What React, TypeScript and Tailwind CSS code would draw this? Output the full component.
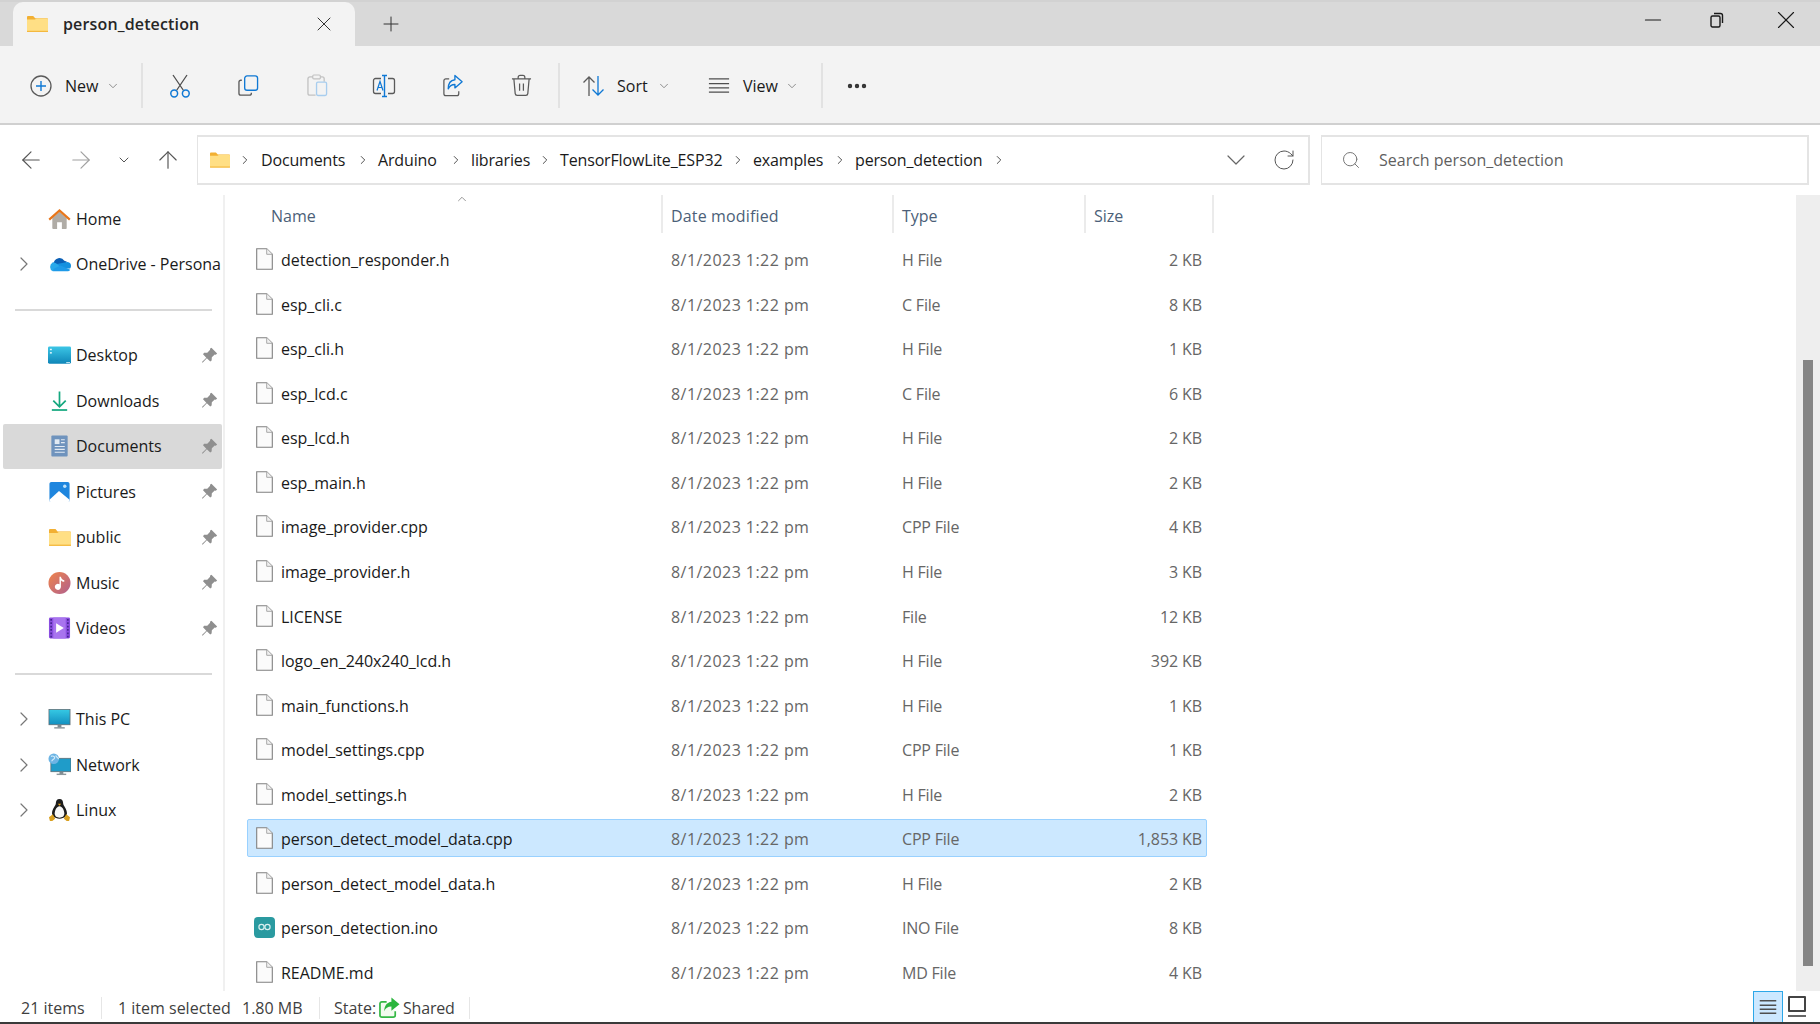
import React from 'react'
import { X, Plus, Minus, ChevronDown, ChevronRight, ChevronUp, ArrowLeft, ArrowRight, ArrowUp, RotateCw, Search, MoreHorizontal } from 'lucide-react'

const FolderIcon = ({ className = '' }: { className?: string }) => (
  <svg viewBox="0 0 21 16" className={className}>
    <path d="M0 1.2C0 .5.5 0 1.2 0h5l2 2.2h11.6c.7 0 1.2.5 1.2 1.2V6H0z" fill="#f2b033" />
    <path d="M0 3.600h8l1.600-1h10.200c.7 0 1.200.5 1.200 1.200v11c0 .7-.5 1.200-1.200 1.200H1.200C.5 16 0 15.500 0 14.800z" fill="#ffdf85" />
    <rect x="0" y="14.800" width="21" height="1.200" fill="#f4b83f" />
  </svg>
)

const FileIcon = () => (
  <svg viewBox="0 0 17 22" className="w-[17px] h-[22px] mb-[2px]">
    <path d="M.7.7h10l5.600 5.600v15H.7z" fill="#fbfbfb" stroke="#808080" strokeWidth="1.100" />
    <path d="M10.700.7v5.600h5.600" fill="#f0f0f0" stroke="#a8a8a8" strokeWidth="1" />
  </svg>
)

const ArduinoIcon = () => (
  <svg viewBox="0 0 21 21" className="w-[21px] h-[21px] mb-[2px]">
    <rect width="21" height="21" rx="4" fill="#2a9aa0" />
    <circle cx="7.500" cy="10" r="2.600" fill="none" stroke="#d8f0f0" strokeWidth="1.200" />
    <circle cx="13.500" cy="10" r="2.600" fill="none" stroke="#d8f0f0" strokeWidth="1.200" />
  </svg>
)

const PinIcon = () => (
  <svg viewBox="0 0 16 16" className="w-[17px] h-[17px]">
    <path d="M9.800.8l5.400 5.400-1.300 1-1-.2-2.700 2.700-.2 3-1.300 1L5.500 10.500 1.500 14.800.9 14.200 5 10 1.900 6.800l1-1.300 3-.2 2.700-2.700-.2-1z" fill="#8f8f8f" />
  </svg>
)

const HomeIcon = () => (
  <svg viewBox="0 0 24 24" className="w-[24px] h-[24px]">
    <path d="M4.500 11L12 4.500 19.500 11v10.500c0 .6-.4 1-1 1h-4v-7h-5v7h-4c-.6 0-1-.4-1-1z" fill="#b0aca6" />
    <path d="M12 1.500l11.500 10.300-1.500 1.700L12 4.600 2 13.500.5 11.800z" fill="#e8761a" />
  </svg>
)

const CloudIcon = () => (
  <svg viewBox="0 0 24 24" className="w-[24px] h-[24px]">
    <path d="M6 11a6 6 0 0 1 11-2.500 5 5 0 0 1 3 1.500L10 16z" fill="#0a5fb5" />
    <path d="M4.500 10.500c2-.3 3.500.4 4.700 1.600L20.500 10a4 4 0 0 1 3.500 4 4.500 4.500 0 0 1-.9 2.700L12 17z" fill="#1490df" />
    <path d="M5 19.500A5 5 0 0 1 5 10.500c2.500 0 4 1.200 5.500 2.500l3 2-9 4.500z" fill="#28a8ea" />
    <path d="M5 19.500h16c1 0 1.800-.6 2.200-1.500L13 13.500 6 17z" fill="#1e9ae8" />
  </svg>
)

const DesktopIcon = () => (
  <svg viewBox="0 0 24 24" className="w-[24px] h-[24px]">
    <defs>
      <linearGradient id="desk" x1="0" y1="0" x2="0" y2="1">
        <stop offset="0" stopColor="#3cc6e6" />
        <stop offset="1" stopColor="#0f86b8" />
      </linearGradient>
    </defs>
    <rect y="3" width="24" height="18" rx="1.500" fill="url(#desk)" />
    <rect x="2" y="5.500" width="2" height="1.500" fill="#e9f8fc" />
    <rect x="2" y="9" width="2" height="1.500" fill="#e9f8fc" />
    <rect x="19" y="19.500" width="4" height="1" fill="#e0f4fa" />
  </svg>
)

const DownloadIcon = () => (
  <svg viewBox="0 0 24 24" className="w-[24px] h-[24px]">
    <path d="M12 2v15.500M5.500 11.500l6.500 6.500 6.500-6.500" fill="none" stroke="#15a87f" strokeWidth="1.800" />
    <rect x="4" y="20.500" width="16" height="1.800" fill="#15a87f" />
  </svg>
)

const DocumentsIcon = () => (
  <svg viewBox="0 0 24 24" className="w-[24px] h-[24px]">
    <rect x="3.500" y="1" width="17" height="22" rx="1" fill="#6f93bd" />
    <rect x="7" y="5" width="5" height="5" fill="#e2eaf3" />
    <path d="M13.500 5.500h4M13.500 8.500h4M7 12.500h10.500M7 15.500h10.500M7 18.500h10.500" stroke="#e2eaf3" strokeWidth="1.200" />
  </svg>
)

const PicturesIcon = () => (
  <svg viewBox="0 0 24 24" className="w-[24px] h-[24px]">
    <rect x="1.500" y="1.500" width="21" height="21" rx="2" fill="#1f86de" />
    <path d="M1.500 20l10-9 11 9v1a1.500 1.500 0 0 1-1.500 1.500H3A1.500 1.500 0 0 1 1.500 21z" fill="#fff" />
    <circle cx="17.500" cy="6" r="1.800" fill="#bfe2fa" />
  </svg>
)

const MusicIcon = () => (
  <svg viewBox="0 0 24 24" className="w-[24px] h-[24px]">
    <defs>
      <linearGradient id="mus" x1="0" y1="0" x2="1" y2="1">
        <stop offset="0" stopColor="#f0844a" />
        <stop offset="1" stopColor="#b0608e" />
      </linearGradient>
    </defs>
    <circle cx="12" cy="12" r="11.500" fill="url(#mus)" />
    <path d="M12 5.500h1.500c.3 2 1.500 3 3.500 3.500v1.800c-1.500-.2-2.700-.8-3.500-1.800V16a3.200 3.200 0 1 1-1.500-2.700z" fill="#fff" />
  </svg>
)

const VideosIcon = () => (
  <svg viewBox="0 0 24 24" className="w-[24px] h-[24px]">
    <rect x="1" y="1" width="22" height="22" rx="1.500" fill="#8a4de0" />
    <rect x="5.500" y="1" width="13" height="22" fill="#a874ee" />
    <path d="M2.500 3.500h1.500M2.500 7h1.500M2.500 10.500h1.500M2.500 14h1.500M2.500 17.500h1.500M2.500 21h1.500M20 3.500h1.500M20 7h1.500M20 10.500h1.500M20 14h1.500M20 17.500h1.500M20 21h1.500" stroke="#3d1f86" strokeWidth="1.800" />
    <path d="M8.500 7l8 5-8 5z" fill="#fff" />
  </svg>
)

const PcIcon = () => (
  <svg viewBox="0 0 24 24" className="w-[24px] h-[24px]">
    <defs>
      <linearGradient id="pc" x1="0" y1="0" x2="0" y2="1">
        <stop offset="0" stopColor="#36c9e4" />
        <stop offset="1" stopColor="#128fc0" />
      </linearGradient>
    </defs>
    <rect x="1" y="2" width="22" height="16" fill="url(#pc)" stroke="#5f6b72" strokeWidth=".8" />
    <rect x="10" y="18" width="4" height="3" fill="#7e8a90" />
    <rect x="6.500" y="20.500" width="11" height="1.500" fill="#8c979c" />
  </svg>
)

const NetworkIcon = () => (
  <svg viewBox="0 0 24 24" className="w-[24px] h-[24px]">
    <rect x="3" y="5" width="21" height="14" fill="#1f9cc9" stroke="#5f6b72" strokeWidth=".8" />
    <rect x="12" y="19" width="4" height="2.500" fill="#7e8a90" />
    <rect x="9" y="21" width="10" height="1.500" fill="#8c979c" />
    <circle cx="6" cy="5.500" r="5.500" fill="#6cb4e4" />
    <path d="M3 3c2-1 4 0 4 1.500S4 6 4 8M8 2c1 2 3 3 3 4" stroke="#d2ecfa" strokeWidth="1.200" fill="none" />
  </svg>
)

const LinuxIcon = () => (
  <svg viewBox="0 0 24 24" className="w-[24px] h-[24px]">
    <path d="M12 .5c2.800 0 3.800 2.200 3.800 4.500 0 2.500 4 6 4 10.500 0 3-2.500 5.500-7.800 5.500S4.200 18.500 4.200 15.500C4.200 11 8.200 7.500 8.200 5 8.200 2.700 9.200.5 12 .5z" fill="#1d1d1d" />
    <path d="M12 8c2.800 0 5 4 5 7.500s-2.200 4.500-5 4.500-5-1-5-4.500S9.200 8 12 8z" fill="#f7f7f7" />
    <path d="M10.300 5.500h3.400L12 7.500z" fill="#e8a51e" />
    <path d="M1 19.500l4-3 2.500 4.500-3 2.500H2zM23 19.500l-4-3-2.500 4.500 3 2.500H22z" fill="#d9a020" />
  </svg>
)

const SharedIcon = () => (
  <svg viewBox="0 0 22 22" className="w-[21px] h-[21px]">
    <path d="M8 5H3a2 2 0 0 0-2 2v12a2 2 0 0 0 2 2h12a2 2 0 0 0 2-2v-4" fill="#f2fbef" stroke="#35b845" strokeWidth="1.800" />
    <path d="M13 .5l8.500 7-8.500 7V10c-4 0-6 1.500-7.500 5 0-6 3-9.500 7.500-10z" fill="#2cb53e" />
  </svg>
)

const NewIcon = () => (
  <svg viewBox="0 0 22 22" className="w-[22px] h-[22px]">
    <circle cx="11" cy="11" r="10" fill="none" stroke="#5a5a5a" strokeWidth="1.300" />
    <path d="M11 6v10M6 11h10" stroke="#0f78d4" strokeWidth="1.400" />
  </svg>
)

const CutIcon = () => (
  <svg viewBox="0 0 22 24" className="w-[22px] h-[24px]">
    <path d="M4 1l10.500 15.500M18 1L7.500 16.500" stroke="#4d4d4d" strokeWidth="1.300" fill="none" />
    <circle cx="5.200" cy="19.500" r="3.400" fill="none" stroke="#0f78d4" strokeWidth="1.500" />
    <circle cx="16.800" cy="19.500" r="3.400" fill="none" stroke="#0f78d4" strokeWidth="1.500" />
  </svg>
)

const CopyIcon = () => (
  <svg viewBox="0 0 22 22" className="w-[21px] h-[21px]">
    <path d="M4 5.500H3a2 2 0 0 0-2 2V19a2 2 0 0 0 2 2h9a2 2 0 0 0 2-2v-.5" fill="none" stroke="#5a5a5a" strokeWidth="1.400" />
    <rect x="7" y="1" width="13.500" height="15" rx="2.500" fill="none" stroke="#0f78d4" strokeWidth="1.400" />
  </svg>
)

const PasteIcon = () => (
  <svg viewBox="0 0 22 24" className="w-[21px] h-[23px]">
    <path d="M6 3H3a2 2 0 0 0-2 2v15a2 2 0 0 0 2 2h6M14 3h2a2 2 0 0 1 2 2v3" fill="none" stroke="#c2c2c2" strokeWidth="1.400" />
    <rect x="6" y="1" width="8" height="4" rx="1.200" fill="none" stroke="#c2c2c2" strokeWidth="1.300" />
    <rect x="10" y="8.500" width="10.500" height="14" rx="1.500" fill="none" stroke="#a8cdee" strokeWidth="1.400" />
  </svg>
)

const RenameIcon = () => (
  <svg viewBox="0 0 24 24" className="w-[24px] h-[24px]">
    <path d="M9 4.500H3.500a2 2 0 0 0-2 2v11a2 2 0 0 0 2 2H9M16 4.500h4.500a2 2 0 0 1 2 2v11a2 2 0 0 1-2 2H16" fill="none" stroke="#5a5a5a" strokeWidth="1.300" />
    <path d="M12.500 1.500v21M10 1.500h5M10 22.500h5" stroke="#0f78d4" strokeWidth="1.400" fill="none" />
    <path d="M5 16.500L8 7.500l3 9M6 13.500h4" stroke="#0f78d4" strokeWidth="1.200" fill="none" />
  </svg>
)

const ShareIcon = () => (
  <svg viewBox="0 0 22 24" className="w-[22px] h-[23px]">
    <path d="M7 5H3.500a2 2 0 0 0-2 2v13.500a2 2 0 0 0 2 2H15a2 2 0 0 0 2-2V18" fill="none" stroke="#5a5a5a" strokeWidth="1.300" />
    <path d="M13 1.500l7.500 6.500-7.500 6.500V11c-3.500 0-5.500 1.200-7 4.500 0-5.500 2.500-9 7-9.500z" fill="none" stroke="#0f78d4" strokeWidth="1.400" strokeLinejoin="round" />
  </svg>
)

const DeleteIcon = () => (
  <svg viewBox="0 0 22 24" className="w-[21px] h-[23px]">
    <path d="M1 5h20M7.500 5V3.500a2 2 0 0 1 2-2h3a2 2 0 0 1 2 2V5M3 5l1.400 15.500a2 2 0 0 0 2 1.800h9.200a2 2 0 0 0 2-1.800L19 5M9 10v7.500M13 10v7.500" fill="none" stroke="#5a5a5a" strokeWidth="1.300" />
  </svg>
)

const SortIcon = () => (
  <svg viewBox="0 0 24 22" className="w-[24px] h-[22px]">
    <path d="M7 21V2M1.500 7.500L7 2l5.500 5.500" fill="none" stroke="#5a5a5a" strokeWidth="1.300" />
    <path d="M16 1v19M10.500 14.500L16 20l5.500-5.500" fill="none" stroke="#0f78d4" strokeWidth="1.300" />
  </svg>
)

const ViewIcon = ({ className = '' }: { className?: string }) => (
  <svg viewBox="0 0 24 18" preserveAspectRatio="none" className={className}>
    <path d="M1 2h22M1 7h22M1 11.500h22M1 16h22" stroke="#4f4f4f" strokeWidth="1.500" />
  </svg>
)

const RestoreIcon = () => (
  <svg viewBox="0 0 14 16" className="w-[14px] h-[16px]">
    <rect x="1" y="4" width="9" height="11" rx="1.500" fill="none" stroke="#1a1a1a" strokeWidth="1.400" />
    <path d="M4 1.500h6.500a2 2 0 0 1 2 2V11" fill="none" stroke="#1a1a1a" strokeWidth="1.400" />
  </svg>
)

const Separator = () => <div className="w-[2px] h-[45px] bg-[#e2e2e2] shrink-0" />

const ToolButton = ({ width, children }: { width: string; children: React.ReactNode }) => (
  <div className={`${width} flex items-center justify-center shrink-0`}>{children}</div>
)

const navItems = [
  { type: 'item', name: 'Home', icon: <HomeIcon /> },
  { type: 'item', name: 'OneDrive - Persona', icon: <CloudIcon />, expand: true },
  { type: 'sep' },
  { type: 'item', name: 'Desktop', icon: <DesktopIcon />, pin: true },
  { type: 'item', name: 'Downloads', icon: <DownloadIcon />, pin: true },
  { type: 'item', name: 'Documents', icon: <DocumentsIcon />, pin: true, selected: true },
  { type: 'item', name: 'Pictures', icon: <PicturesIcon />, pin: true },
  { type: 'item', name: 'public', icon: <FolderIcon className="w-[22px] h-[17px]" />, pin: true },
  { type: 'item', name: 'Music', icon: <MusicIcon />, pin: true },
  { type: 'item', name: 'Videos', icon: <VideosIcon />, pin: true },
  { type: 'sep' },
  { type: 'item', name: 'This PC', icon: <PcIcon />, expand: true },
  { type: 'item', name: 'Network', icon: <NetworkIcon />, expand: true },
  { type: 'item', name: 'Linux', icon: <LinuxIcon />, expand: true },
]

const files = [
  ['detection_responder.h', 'H File', '2 KB'],
  ['esp_cli.c', 'C File', '8 KB'],
  ['esp_cli.h', 'H File', '1 KB'],
  ['esp_lcd.c', 'C File', '6 KB'],
  ['esp_lcd.h', 'H File', '2 KB'],
  ['esp_main.h', 'H File', '2 KB'],
  ['image_provider.cpp', 'CPP File', '4 KB'],
  ['image_provider.h', 'H File', '3 KB'],
  ['LICENSE', 'File', '12 KB'],
  ['logo_en_240x240_lcd.h', 'H File', '392 KB'],
  ['main_functions.h', 'H File', '1 KB'],
  ['model_settings.cpp', 'CPP File', '1 KB'],
  ['model_settings.h', 'H File', '2 KB'],
  ['person_detect_model_data.cpp', 'CPP File', '1,853 KB'],
  ['person_detect_model_data.h', 'H File', '2 KB'],
  ['person_detection.ino', 'INO File', '8 KB'],
  ['README.md', 'MD File', '4 KB'],
]

const crumbs = [
  ['Documents', 'w-[117px]'],
  ['Arduino', 'w-[93px]'],
  ['libraries', 'w-[89px]'],
  ['TensorFlowLite_ESP32', 'w-[193px]'],
  ['examples', 'w-[102px]'],
  ['person_detection', 'w-[159px]'],
]

export default function App() {
  return (
    <div className="w-[1820px] h-[1024px] flex flex-col overflow-hidden bg-white text-[16px] text-[#1a1a1a] font-['Open_Sans','Noto_Sans',sans-serif]">
      {/* Title bar */}
      <div className="h-[46px] flex shrink-0 bg-[#d9d9d9] border-t-2 border-[#d2d2d2]">
        <div className="ml-[13px] w-[342px] h-[44px] flex items-center bg-[#f3f3f3] rounded-t-[10px]">
          <FolderIcon className="ml-[14px] w-[21px] h-[16px]" />
          <span className="ml-[15px] font-semibold text-[#262626] tracking-[0.15px]">person_detection</span>
          <X className="ml-auto mr-[19px] w-[24px] h-[24px] text-[#333]" strokeWidth={1} />
        </div>
        <div className="ml-[24px] h-[44px] flex items-center">
          <Plus className="w-[24px] h-[24px] text-[#333]" strokeWidth={1} />
        </div>
        <div className="ml-auto h-[36px] flex items-center">
          <Minus className="w-[26px] h-[26px] text-[#1a1a1a] mr-[44px]" strokeWidth={1} />
          <RestoreIcon />
          <X className="w-[30px] h-[30px] text-[#1a1a1a] ml-[47px] mr-[19px]" strokeWidth={0.9} />
        </div>
      </div>

      {/* Command bar */}
      <div className="h-[79px] flex items-center shrink-0 bg-[#f3f3f3] border-b-2 border-[#d0d0d0] pl-[30px] pt-[2px]">
        <NewIcon />
        <span className="ml-[13px] w-[41px]">New</span>
        <ChevronDown className="w-[14px] h-[14px] text-[#777]" strokeWidth={1.4} />
        <div className="ml-[21px]"><Separator /></div>
        <ToolButton width="w-[73px]"><CutIcon /></ToolButton>
        <ToolButton width="w-[64px]"><CopyIcon /></ToolButton>
        <ToolButton width="w-[74px]"><PasteIcon /></ToolButton>
        <ToolButton width="w-[60px]"><RenameIcon /></ToolButton>
        <ToolButton width="w-[78px]"><ShareIcon /></ToolButton>
        <ToolButton width="w-[58px]"><DeleteIcon /></ToolButton>
        <div className="ml-[8px]"><Separator /></div>
        <div className="ml-[22px]"><SortIcon /></div>
        <span className="ml-[11px] w-[40px]">Sort</span>
        <ChevronDown className="w-[14px] h-[14px] text-[#777]" strokeWidth={1.4} />
        <ViewIcon className="ml-[37px] w-[22px] h-[17px]" />
        <span className="ml-[13px] w-[42px]">View</span>
        <ChevronDown className="w-[14px] h-[14px] text-[#777]" strokeWidth={1.4} />
        <div className="ml-[22px]"><Separator /></div>
        <MoreHorizontal className="ml-[22px] w-[24px] h-[24px] text-[#333]" strokeWidth={2.4} />
      </div>

      {/* Address row */}
      <div className="h-[70px] flex items-center shrink-0">
        <ArrowLeft className="ml-[17px] w-[28px] h-[28px] text-[#555]" strokeWidth={1} />
        <ArrowRight className="ml-[22px] w-[28px] h-[28px] text-[#a0a0a0]" strokeWidth={1} />
        <ChevronDown className="ml-[21px] w-[16px] h-[16px] text-[#555]" strokeWidth={1.5} />
        <ArrowUp className="ml-[22px] w-[28px] h-[28px] text-[#555]" strokeWidth={1} />
        <div className="ml-[15px] w-[1113px] h-[50px] flex items-center border-2 border-[#e4e4e4] border-l-[1px] pl-[12px] shrink-0 tracking-[-0.15px]">
          <FolderIcon className="w-[20px] h-[16px] shrink-0" />
          <ChevronRight className="ml-[8px] mr-[9px] w-[14px] h-[14px] text-[#444] shrink-0" strokeWidth={1.6} />
          {crumbs.map(([label, width]) => (
            <div key={label} className={`${width} flex items-center justify-between shrink-0`}>
              <span>{label}</span>
              <ChevronRight className="w-[14px] h-[14px] mr-[8px] shrink-0 text-[#444]" strokeWidth={1.6} />
            </div>
          ))}
          <ChevronDown className="ml-auto mr-[20px] w-[32px] h-[32px] text-[#666]" strokeWidth={0.9} />
          <RotateCw className="mr-[12px] w-[24px] h-[24px] text-[#555]" strokeWidth={1} />
        </div>
        <div className="ml-[11px] w-[488px] h-[50px] flex items-center border-2 border-[#e4e4e4] border-l-[1px] pl-[19px] shrink-0">
          <Search className="w-[20px] h-[20px] text-[#777]" strokeWidth={1.2} />
          <span className="ml-[18px] text-[#5f5f5f]">Search person_detection</span>
        </div>
      </div>

      {/* Main */}
      <div className="flex-1 flex min-h-0">
        <div className="w-[225px] shrink-0 border-r-2 border-[#f0f0f0] pt-[1px]">
          {navItems.map((item, i) =>
            item.type === 'sep' ? (
              <div key={i} className="h-[45.5px] flex items-center pl-[15px]">
                <div className="w-[197px] h-[2px] bg-[#d9d9d9]" />
              </div>
            ) : (
              <div key={i} className="h-[45.5px] flex items-center pl-[3px]">
                <div className={`w-[219px] h-[45px] flex items-center rounded-[2px] ${item.selected ? 'bg-[#d9d9d9]' : ''}`}>
                  <div className="w-[45px] shrink-0 flex items-center justify-center pr-[3px]">
                    {item.expand && <ChevronRight className="w-[24px] h-[24px] text-[#777]" strokeWidth={1.2} />}
                  </div>
                  <div className="w-[28px] shrink-0 flex items-center justify-center pr-[5px]">{item.icon}</div>
                  <span className="whitespace-nowrap">{item.name}</span>
                  {item.pin && <div className="ml-auto mr-[4px]"><PinIcon /></div>}
                </div>
              </div>
            )
          )}
        </div>

        {/* File list */}
        <div className="flex-1 pl-[22px] overflow-hidden">
          <div className="h-[43px] flex w-[967px] text-[#4c5f78]">
            <div className="w-[416px] h-[38px] flex items-center pt-[3px] pl-[24px] relative border-r-2 border-[#ebebeb]">
              <span>Name</span>
              <ChevronUp className="absolute left-[207px] top-[-3px] w-[16px] h-[14px] text-[#777]" strokeWidth={1.3} />
            </div>
            <div className="w-[231px] h-[38px] flex items-center pt-[3px] pl-[8px] border-r-2 border-[#ebebeb] tracking-[0.15px]">Date modified</div>
            <div className="w-[192px] h-[38px] flex items-center pt-[3px] pl-[8px] border-r-2 border-[#ebebeb]">Type</div>
            <div className="w-[128px] h-[38px] flex items-center pt-[3px] pl-[8px] border-r-2 border-[#ebebeb]">Size</div>
          </div>
          {files.map(([name, type, size]) => {
            const selected = name === 'person_detect_model_data.cpp'
            return (
              <div key={name} className="h-[44.54px] flex items-center">
                <div className={`w-[960px] h-[38px] mb-[2px] pt-[2px] flex items-center rounded-[2px] border ${selected ? 'bg-[#cce8ff] border-[#99d1ff]' : 'border-transparent'}`}>
                  <div className="w-[33px] flex justify-center">
                    {name.endsWith('.ino') ? <ArduinoIcon /> : <FileIcon />}
                  </div>
                  <div className="w-[390px] whitespace-nowrap tracking-[-0.02px]">{name}</div>
                  <div className="w-[231px] text-[#666] tracking-[0.45px]">8/1/2023 1:22 pm</div>
                  <div className="w-[150px] text-[#666] tracking-[-0.2px]">{type}</div>
                  <div className="w-[150px] text-right text-[#666] tracking-[-0.1px]">{size}</div>
                </div>
              </div>
            )
          })}
        </div>

        {/* Scrollbar */}
        <div className="w-[24px] shrink-0 bg-[#eeeeee] pl-[7px] pt-[165px]">
          <div className="w-[10px] h-[606px] bg-[#858585]" />
        </div>
      </div>

      {/* Status bar */}
      <div className="h-[31px] flex items-center shrink-0 text-[#3f3f3f]">
        <div className="flex items-center pt-[2px]">
          <span className="ml-[21px] w-[80px]">21 items</span>
          <div className="w-px h-[22px] bg-[#e6e6e6]" />
          <span className="ml-[16px] w-[124px]">1 item selected</span>
          <span className="w-[77px]">1.80 MB</span>
          <div className="w-px h-[22px] bg-[#e6e6e6]" />
          <span className="ml-[14px] w-[45px]">State:</span>
          <SharedIcon />
          <span className="ml-[3px] w-[66px] tracking-[-0.2px]">Shared</span>
          <div className="w-px h-[22px] bg-[#e6e6e6]" />
        </div>
        <div className="ml-auto w-[30px] h-[31px] flex items-center justify-center bg-[#cce8ff] border border-[#2ca7e8] border-b-0">
          <ViewIcon className="w-[18px] h-[16px]" />
        </div>
        <div className="ml-[5px] mr-[14px] w-[18px] flex flex-col gap-[3px]">
          <div className="w-[18px] h-[16px] border-2 border-[#444] rounded-[1px]" />
          <div className="w-[18px] h-[2px] bg-[#666]" />
        </div>
      </div>
      <div className="h-[2px] shrink-0 bg-[#3a3a3a]" />
    </div>
  )
}
